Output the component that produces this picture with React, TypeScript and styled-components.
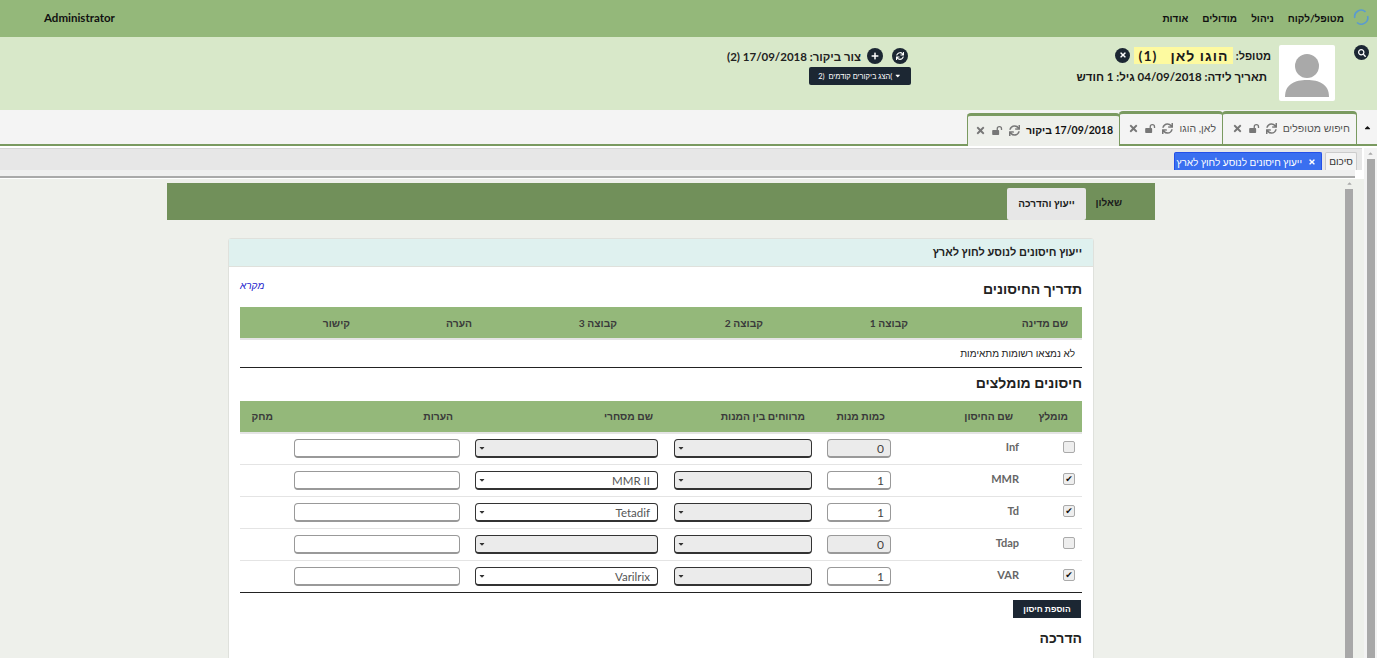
import React from 'react';
import styled, { createGlobalStyle } from 'styled-components';
import { FaPlus, FaSearch, FaSync, FaTimes, FaCaretDown, FaCaretUp } from 'react-icons/fa';

const GlobalStyle = createGlobalStyle`
  html, body {
    margin: 0;
    padding: 0;
    height: 100%;
    overflow: hidden;
    background: #fff;
  }
  * { box-sizing: border-box; }
`;

const font = `Lato, "Liberation Sans", sans-serif`;

const Page = styled.div`
  width: 1377px;
  height: 658px;
  overflow: hidden;
  direction: rtl;
  font-family: ${font};
  color: #222;
`;

const TopBar = styled.header`
  height: 37px;
  background: #94b87a;
  display: flex;
  align-items: center;
  padding: 0 8px 2px 44px;
`;
const Logo = styled.svg`
  width: 16px;
  height: 16px;
  margin-left: 9px;
  margin-top: -2px;
`;
const NavLink = styled.a`
  font-size: 10px;
  font-weight: 700;
  color: #111;
  margin-left: 14px;
`;
const UserName = styled.span`
  margin-right: auto;
  direction: ltr;
  font-size: 11.5px;
  font-weight: 700;
  color: #111;
`;

const PatientHeader = styled.section`
  height: 73px;
  background: #d8e8c9;
  display: flex;
  align-items: flex-start;
  padding: 8px 8px 0 0;
`;
const Round = styled.span<{ size?: number }>`
  width: ${({ size }) => size || 15}px;
  height: ${({ size }) => size || 15}px;
  border-radius: 50%;
  background: #1c2733;
  color: #fff;
  display: inline-flex;
  align-items: center;
  justify-content: center;
  flex: none;
  font-size: 8px;
`;
const Avatar = styled.div`
  width: 56px;
  height: 56px;
  background: #fff;
  border-radius: 2px;
  margin: 0 19px 0 0;
`;
const PatientInfo = styled.div`
  margin-right: 8px;
  width: 200px;
`;
const PatientLine = styled.div`
  display: flex;
  align-items: center;
  gap: 4px;
  height: 20px;
  font-size: 11px;
  font-weight: 700;
  color: #1a1a1a;
`;
const PatientLabel = styled.span`
  width: 34px;
  white-space: nowrap;
`;
const Highlight = styled.span`
  background: #fdfaa0;
  width: 99px;
  height: 17px;
  font-size: 14px;
  letter-spacing: 1px;
  text-align: center;
  line-height: 17px;
  white-space: pre;
`;
const BirthLine = styled.div`
  margin: 5px 4px 0 0;
  font-size: 11.5px;
  font-weight: 700;
  color: #1a1a1a;
  white-space: nowrap;
`;
const VisitBox = styled.div`
  margin-right: 160px;
`;
const VisitLine = styled.div`
  display: flex;
  align-items: center;
  gap: 6px;
  height: 22px;
  padding-right: 3px;
  font-size: 11.5px;
  font-weight: 700;
  color: #222;
  white-space: nowrap;
`;
const VisitIcons = styled.span`
  display: flex;
  gap: 9px;
`;
const VisitButton = styled.button`
  display: flex;
  align-items: center;
  justify-content: center;
  gap: 2px;
  width: 102px;
  height: 18px;
  margin: 0;
  padding: 0;
  border: 0;
  border-radius: 2px;
  background: #1c2733;
  color: #fff;
  font-family: ${font};
  font-size: 7.5px;
  direction: rtl;
  white-space: pre;
`;

const TabStrip = styled.nav`
  height: 36px;
  background: #f4f4f4;
  border-bottom: 2px solid #7a9a60;
  display: flex;
  align-items: flex-end;
  padding-right: 20px;
  position: relative;
`;
const Caret = styled.span`
  position: absolute;
  right: 5px;
  top: 13px;
  font-size: 9px;
  color: #111;
  display: flex;
`;
const Tab = styled.div<{ active?: boolean; w: number }>`
  width: ${({ w }) => w}px;
  height: 33px;
  margin-bottom: ${({ active }) => (active ? '-2px' : '0')};
  background: ${({ active }) => (active ? '#eef0eb' : '#f4f4f4')};
  border: 1px solid #7a9a60;
  border-top: 3px solid #7a9a60;
  border-bottom: 0;
  border-radius: 4px 4px 0 0;
  display: flex;
  align-items: center;
  gap: 6px;
  padding: 0 6px 2px 0;
  font-size: 10.5px;
  font-weight: ${({ active }) => (active ? 700 : 400)};
  color: ${({ active }) => (active ? '#111' : '#555')};
  white-space: nowrap;
  position: relative;
  z-index: 1;
  & + & { margin-right: -1px; }
  svg { color: #777; font-size: 11px; flex: none; }
`;

const Body = styled.div`
  display: flex;
  height: 512px;
  margin-top: 2px;
`;
const Scrollbar = styled.div<{ w: number; pad: number }>`
  width: ${({ w }) => w}px;
  flex: none;
  background: #f3f3f3;
  display: flex;
  flex-direction: column;
  align-items: center;
  padding-top: ${({ pad }) => pad}px;
  color: #aaa;
  font-size: 7px;
`;
const Thumb = styled.div`
  width: 8px;
  flex: 1;
  margin-top: 2px;
  background: #a8a8a8;
`;
const Main = styled.div`
  flex: 1;
  min-width: 0;
  display: flex;
  flex-direction: column;
`;
const SubTabs = styled.div`
  height: 22px;
  margin-right: 2px;
  background: #e7e7e7;
  border-top: 1px solid #d5d5d5;
  display: flex;
  align-items: flex-end;
  gap: 3px;
  padding-right: 5px;
`;
const SummaryTab = styled.div`
  width: 32px;
  height: 18px;
  background: #f4f4f4;
  border: 1px solid #ccc;
  border-bottom: 0;
  border-radius: 2px 2px 0 0;
  font-size: 10px;
  text-align: center;
  line-height: 16px;
  color: #333;
`;
const ActiveSubTab = styled.div`
  width: 148px;
  height: 18px;
  background: #3a6ff0;
  border: 1px solid #2450e8;
  border-bottom: 0;
  border-radius: 2px 2px 0 0;
  display: flex;
  align-items: center;
  gap: 6px;
  padding-right: 5px;
  font-size: 10px;
  color: #fff;
  white-space: nowrap;
  svg { font-size: 8px; flex: none; }
`;
const SubTabRule = styled.div`
  height: 8px;
  margin-right: 9px;
  background: #efefef;
  border-bottom: 2px solid #a9a9a9;
`;
const Scroller = styled.div`
  flex: 1;
  min-height: 0;
  display: flex;
  background: #eef0eb;
  border-top: 1px solid #fff;
`;
const Content = styled.main`
  width: 1322px;
  flex: none;
  overflow: hidden;
  margin-right: 23px;
  padding-top: 4px;
  order: 2;
`;
const InnerBar = styled(Scrollbar)`
  order: 1;
  margin-right: 11px;
  background: #eef0eb;
`;
const SectionBar = styled.div`
  width: 988px;
  height: 37px;
  margin: 0 auto;
  background: #71905a;
  display: flex;
  align-items: center;
  padding-right: 33px;
  font-size: 10px;
  font-weight: 700;
  color: #1b1b1b;
`;
const SectionLabel = styled.span`
  width: 25px;
  white-space: nowrap;
`;
const SectionTab = styled.div`
  width: 79px;
  height: 32px;
  margin: 4px 11px 0 0;
  background: #e7e7e7;
  border-radius: 2px;
  font-size: 10px;
  line-height: 31px;
  text-align: center;
`;
const Panel = styled.article`
  width: 866px;
  margin: 18px auto 0;
  padding-bottom: 40px;
  background: #fff;
  border: 1px solid #dfe1dc;
  border-radius: 3px 3px 0 0;
`;
const PanelHead = styled.div`
  height: 28px;
  background: #dff1ef;
  border-bottom: 1px solid #dfe1dc;
  padding-right: 11px;
  font-size: 11px;
  font-weight: 700;
  line-height: 26px;
  color: #222;
`;
const PanelBody = styled.div`
  padding: 0 11px;
`;
const TitleRow = styled.div<{ compact?: boolean }>`
  display: flex;
  justify-content: space-between;
  align-items: flex-start;
  height: ${({ compact }) => (compact ? 33 : 40)}px;
  padding-top: ${({ compact }) => (compact ? 5 : 12)}px;
`;
const Heading = styled.h3`
  margin: 0;
  font-size: 14px;
  font-weight: 700;
  line-height: 20px;
  color: #222;
`;
const Legend = styled.a`
  font-size: 10px;
  font-style: italic;
  color: #1a1acc;
`;
const Table = styled.table`
  width: 842px;
  table-layout: fixed;
  border-collapse: collapse;
  font-size: 10px;
`;
const Head = styled.th`
  height: 32px;
  background: #94b87a;
  border-bottom: 2px solid #e4e4e4;
  padding: 0 14px 0 0;
  text-align: right;
  font-size: 10.3px;
  font-weight: 700;
  color: #3a3a3a;
`;
const EmptyCell = styled.td`
  height: 28px;
  padding: 0 7px 0 0;
  font-size: 10px;
  color: #222;
  border-bottom: 1px solid #222;
`;
const Row = styled.tr<{ last?: boolean }>`
  border-bottom: 1px solid ${({ last }) => (last ? '#222' : '#e4e4e4')};
`;
const Cell = styled.td`
  height: 32px;
  padding: 0 7px;
`;
const QtyCell = styled(Cell)`
  padding: 0 8px;
`;
const BrandCell = styled(Cell)`
  padding: 0 9px 0 8px;
`;
const NameCell = styled(Cell)`
  padding: 0 8px 4px 0;
  text-align: right;
  direction: ltr;
  font-size: 11px;
  font-weight: 700;
  color: #666;
`;
const CheckCell = styled(Cell)`
  padding: 0 7px 4px 0;
  text-align: right;
`;
const Tick = styled.input`
  appearance: none;
  display: block;
  position: relative;
  width: 12px;
  height: 12px;
  margin: 0;
  border: 1px solid #aaa;
  border-radius: 2px;
  background: #eee;
  &:checked::before {
    content: '✔';
    position: absolute;
    inset: 0;
    font: 9px/10px "DejaVu Sans", sans-serif;
    text-align: center;
    color: #111;
  }
`;
const Field = styled.input<{ off?: boolean }>`
  display: block;
  width: 100%;
  height: 19px;
  padding: 0 6px;
  border: 1px solid #999;
  border-bottom-width: 2px;
  border-radius: 4px;
  background: ${({ off }) => (off ? '#ebebeb' : '#fff')};
  color: #444;
  font-family: ${font};
  font-size: 12px;
  text-align: right;
  direction: ltr;
`;
const SelectBox = styled.div<{ off?: boolean }>`
  display: flex;
  align-items: center;
  justify-content: space-between;
  direction: ltr;
  height: 19px;
  padding: 0 7px 0 2px;
  border: 1px solid #333;
  border-bottom-width: 2px;
  border-radius: 4px;
  background: ${({ off }) => (off ? '#ebebeb' : '#fff')};
  color: #555;
  font-size: 11.5px;
  svg { font-size: 8px; color: #333; }
`;
const AddRow = styled.div`
  display: flex;
  padding: 7px 1px 10px 0;
`;
const AddButton = styled.button`
  width: 68px;
  height: 18px;
  padding: 0;
  border: 0;
  background: #1c2733;
  color: #fff;
  font-family: ${font};
  font-size: 8.5px;
  font-weight: 700;
`;

const vaccines = [
  { name: 'Inf', on: false, qty: '0', brand: '' },
  { name: 'MMR', on: true, qty: '1', brand: 'MMR II' },
  { name: 'Td', on: true, qty: '1', brand: 'Tetadif' },
  { name: 'Tdap', on: false, qty: '0', brand: '' },
  { name: 'VAR', on: true, qty: '1', brand: 'Varilrix' },
];

const countryCols = [
  ['שם מדינה', 160],
  ['קבוצה 1', 145],
  ['קבוצה 2', 146],
  ['קבוצה 3', 145],
  ['הערה', 122],
  ['קישור', 124],
] as const;

const vaccineCols = [
  ['מומלץ', 55],
  ['שם החיסון', 128],
  ['כמות מנות', 80],
  ['מרווחים בין המנות', 152],
  ['שם מסחרי', 200],
  ['הערות', 180],
  ['מחק', 47],
] as const;

const OpenLock = () => (
  <svg width="11" height="9" viewBox="0 0 13 11" fill="currentColor">
    <rect x="0" y="5" width="8.5" height="6" rx="1" />
    <path d="M6.2 5.5 V3.4 A2.6 2.6 0 0 1 11.4 3.4 V5" fill="none" stroke="currentColor" strokeWidth="1.6" />
  </svg>
);

const TabIcons = () => (
  <>
    <FaSync />
    <OpenLock />
    <FaTimes />
  </>
);

export default function App() {
  return (
    <Page>
      <GlobalStyle />
      <TopBar>
        <Logo viewBox="0 0 16 16" fill="none" stroke="#5a9bd0" strokeWidth="1.6">
          <path d="M1.8 9 A6.5 6.5 0 0 1 12.5 2.8" />
          <path d="M14.6 7 A6.5 6.5 0 0 1 4 13.5" />
        </Logo>
        <NavLink>מטופל/לקוח</NavLink>
        <NavLink>ניהול</NavLink>
        <NavLink>מודולים</NavLink>
        <NavLink>אודות</NavLink>
        <UserName>Administrator</UserName>
      </TopBar>

      <PatientHeader>
        <Round><FaSearch /></Round>
        <Avatar>
          <svg width="56" height="56" viewBox="0 0 56 56">
            <circle cx="28" cy="21" r="12" fill="#a9a9a9" />
            <path d="M6 52 C6 39 16 35 28 35 C40 35 50 39 50 52 Z" fill="#a9a9a9" />
          </svg>
        </Avatar>
        <PatientInfo>
          <PatientLine>
            <PatientLabel>מטופל:</PatientLabel>
            <Highlight>הוגו לאן   (1)</Highlight>
            <Round><FaTimes /></Round>
          </PatientLine>
          <BirthLine>תאריך לידה: 04/09/2018 גיל: 1 חודש</BirthLine>
        </PatientInfo>
        <VisitBox>
          <VisitLine>
            <VisitIcons>
              <Round size={16}><FaSync /></Round>
              <Round size={16}><FaPlus /></Round>
            </VisitIcons>
            <span>צור ביקור: 17/09/2018 (2)</span>
          </VisitLine>
          <VisitButton>
            <FaCaretDown />
            )הצג ביקורים קודמים  (2
          </VisitButton>
        </VisitBox>
      </PatientHeader>

      <TabStrip>
        <Caret><FaCaretUp /></Caret>
        <Tab w={135}>חיפוש מטופלים <TabIcons /></Tab>
        <Tab w={104}>לאן, הוגו <TabIcons /></Tab>
        <Tab w={153} active>17/09/2018 ביקור <TabIcons /></Tab>
      </TabStrip>

      <Body>
        <Scrollbar w={13} pad={2}>
          <FaCaretUp />
          <Thumb />
        </Scrollbar>
        <Main>
          <SubTabs>
            <SummaryTab>סיכום</SummaryTab>
            <ActiveSubTab><FaTimes />ייעוץ חיסונים לנוסע לחוץ לארץ</ActiveSubTab>
          </SubTabs>
          <SubTabRule />
          <Scroller>
            <InnerBar w={8} pad={1}>
              <FaCaretUp />
              <Thumb />
            </InnerBar>
            <Content>
              <SectionBar>
                <SectionLabel>שאלון</SectionLabel>
                <SectionTab>ייעוץ והדרכה</SectionTab>
              </SectionBar>
              <Panel>
                <PanelHead>ייעוץ חיסונים לנוסע לחוץ לארץ</PanelHead>
                <PanelBody>
                  <TitleRow>
                    <Heading>תדריך החיסונים</Heading>
                    <Legend>מקרא</Legend>
                  </TitleRow>
                  <Table>
                    <thead>
                      <tr>
                        {countryCols.map(([label, width]) => (
                          <Head key={label} style={{ width }}>{label}</Head>
                        ))}
                      </tr>
                    </thead>
                    <tbody>
                      <tr>
                        <EmptyCell colSpan={6}>לא נמצאו רשומות מתאימות</EmptyCell>
                      </tr>
                    </tbody>
                  </Table>
                  <TitleRow compact>
                    <Heading>חיסונים מומלצים</Heading>
                  </TitleRow>
                  <Table>
                    <thead>
                      <tr>
                        {vaccineCols.map(([label, width]) => (
                          <Head key={label} style={{ width }}>{label}</Head>
                        ))}
                      </tr>
                    </thead>
                    <tbody>
                      {vaccines.map((v, i) => (
                        <Row key={v.name} last={i === vaccines.length - 1}>
                          <CheckCell><Tick type="checkbox" defaultChecked={v.on} /></CheckCell>
                          <NameCell>{v.name}</NameCell>
                          <QtyCell><Field off={!v.on} defaultValue={v.qty} /></QtyCell>
                          <Cell><SelectBox off><FaCaretDown /></SelectBox></Cell>
                          <BrandCell><SelectBox off={!v.brand}><FaCaretDown />{v.brand}</SelectBox></BrandCell>
                          <Cell><Field /></Cell>
                          <Cell />
                        </Row>
                      ))}
                    </tbody>
                  </Table>
                  <AddRow><AddButton>הוספת חיסון</AddButton></AddRow>
                  <Heading>הדרכה</Heading>
                </PanelBody>
              </Panel>
            </Content>
          </Scroller>
        </Main>
      </Body>
    </Page>
  );
}
